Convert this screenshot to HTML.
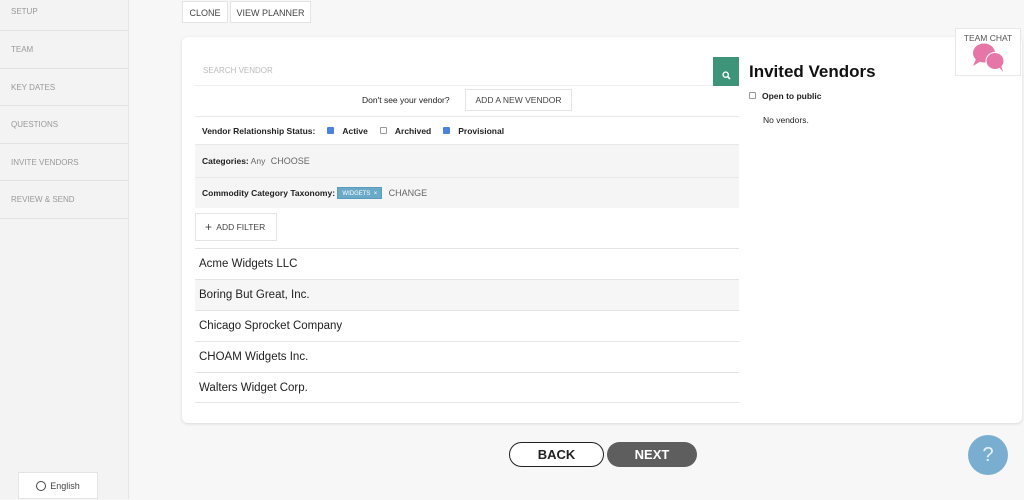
<!DOCTYPE html>
<html><head><style>
*{margin:0;padding:0;box-sizing:border-box}
body{width:1024px;height:499px;background:#f7f7f8;font-family:"Liberation Sans",sans-serif;position:relative;overflow:hidden;color:#222}
.sb{position:absolute;left:0;top:0;width:129px;height:499px;background:#f3f3f4;border-right:1px solid #e6e6e6}
.sb div{height:37.5px;border-bottom:1px solid #e2e2e2;font-size:8px;color:#999;padding:0 11px;line-height:37px}
.sb div:first-child{height:31px;line-height:24px}
.btn{position:absolute;background:#fff;border:1px solid #e4e4e4;font-size:9px;color:#444;text-align:center}
.panel{position:absolute;left:182px;top:37px;width:840px;height:386px;background:#fff;border-radius:6px;box-shadow:0 1px 3px rgba(0,0,0,.12)}
.a{position:absolute}
.row{position:absolute;left:13px;width:544px;font-size:8.5px}
.vend{position:absolute;left:13px;width:544px;height:31px;border-top:1px solid #e4e4e4;font-size:11.5px;padding-left:4px;line-height:30px;color:#222}
.cb{display:inline-block;width:7px;height:7px;border:1px solid #999;border-radius:1px;vertical-align:0;margin:0 8px 0 12px;background:#fff}
.cb.on{background:#4a82dd;border-color:#4a82dd}
b{font-weight:bold}
</style></head><body>
<div class="sb">
<div>SETUP</div><div>TEAM</div><div>KEY DATES</div><div>QUESTIONS</div><div>INVITE VENDORS</div><div>REVIEW &amp; SEND</div>
</div>
<div class="btn" style="left:18px;top:472px;width:80px;height:27px;line-height:27px;font-size:9px;color:#444"><span style="display:inline-block;width:10px;height:10px;border:1.5px solid #444;border-radius:50%;vertical-align:-2px;margin-right:4px"></span>English</div>
<div class="btn" style="left:182px;top:1px;width:46px;height:22px;line-height:22px">CLONE</div>
<div class="btn" style="left:230px;top:1px;width:81px;height:22px;line-height:22px">VIEW PLANNER</div>
<div class="panel">
 <div class="a" style="left:21px;top:29px;font-size:8px;color:#bbb">SEARCH VENDOR</div>
 <div class="a" style="left:13px;top:48px;width:520px;border-top:1px solid #eee"></div>
 <div class="a" style="left:531px;top:20px;width:26px;height:29px;background:#3d9478;text-align:center;padding-top:10px"><svg width="9" height="9" viewBox="0 0 9 9"><circle cx="3.7" cy="3.7" r="2.6" fill="none" stroke="#fff" stroke-width="1.4"/><path d="M5.6 5.6 L8 8" stroke="#fff" stroke-width="1.6"/></svg></div>
 <div class="a" style="left:180px;top:58px;font-size:8.5px">Don't see your vendor?</div>
 <div class="a" style="left:283px;top:52px;width:107px;height:22px;border:1px solid #e4e4e4;font-size:8.5px;color:#444;text-align:center;line-height:21px">ADD A NEW VENDOR</div>
 <div class="row" style="top:79px;height:28px;border-top:1px solid #e8e8e8;line-height:28px;padding-left:7px"><b>Vendor Relationship Status:</b><span class="cb on"></span><b>Active</b><span class="cb"></span><b>Archived</b><span class="cb on"></span><b>Provisional</b></div>
 <div class="row" style="top:107px;height:33px;background:#f5f5f6;border-top:1px solid #e8e8e8;line-height:33px;padding-left:7px"><b>Categories:</b> <span style="color:#666">Any</span> <span style="color:#666;font-size:9px;margin-left:3px">CHOOSE</span></div>
 <div class="row" style="top:140px;height:31px;background:#f5f5f6;border-top:1px solid #e8e8e8;line-height:31px;padding-left:7px"><b>Commodity Category Taxonomy:</b> <span style="display:inline-block;background:#6aaac8;color:#fff;font-size:6px;height:12px;line-height:12px;padding:0 4px;vertical-align:1px;border:1px solid #5b9cbc">WIDGETS &nbsp;×</span> <span style="color:#666;font-size:9px;margin-left:4px">CHANGE</span></div>
 <div class="a" style="left:13px;top:176px;width:82px;height:28px;border:1px solid #e4e4e4;font-size:8.5px;color:#444;line-height:27px;padding-left:9px"><span style="font-size:12px;vertical-align:-1px">+</span>&nbsp; ADD FILTER</div>
 <div class="vend" style="top:211px">Acme Widgets LLC</div>
 <div class="vend" style="top:242px;background:#f6f6f6">Boring But Great, Inc.</div>
 <div class="vend" style="top:273px">Chicago Sprocket Company</div>
 <div class="vend" style="top:304px">CHOAM Widgets Inc.</div>
 <div class="vend" style="top:335px;border-bottom:1px solid #e4e4e4">Walters Widget Corp.</div>
 <div class="a" style="left:567px;top:25px;font-size:17px;font-weight:bold;color:#111">Invited Vendors</div>
 <div class="a" style="left:567px;top:54px;font-size:8.5px"><span class="cb" style="margin:0 6px 0 0"></span><b>Open to public</b></div>
 <div class="a" style="left:581px;top:78px;font-size:8.5px">No vendors.</div>
</div>
<div class="a" style="left:955px;top:28px;width:66px;height:48px;background:#fff;border:1px solid #e8e8e8;font-size:8.5px;color:#555;text-align:center;padding-top:4px">TEAM CHAT
<svg width="40" height="32" viewBox="0 0 40 32" style="display:block;margin:-1px auto 0"><ellipse cx="16" cy="11" rx="11" ry="9.5" fill="#e676a8"/><path d="M8 17 L5 24 L13 19Z" fill="#e676a8"/><ellipse cx="27" cy="19" rx="9" ry="8.5" fill="#e676a8" stroke="#fff" stroke-width="1"/><path d="M31 25 L35 30 L33 23Z" fill="#e676a8"/></svg></div>
<div class="a" style="left:509px;top:442px;width:95px;height:25px;border:1.5px solid #222;border-radius:13px;background:#fff;text-align:center;line-height:23px;font-size:13px;font-weight:bold">BACK</div>
<div class="a" style="left:607px;top:442px;width:90px;height:25px;border-radius:13px;background:#5e5e5e;color:#fff;text-align:center;line-height:25px;font-size:13px;font-weight:bold">NEXT</div>
<div class="a" style="left:968px;top:435px;width:40px;height:40px;border-radius:50%;background:#79aed0;color:#e8f2f8;text-align:center;line-height:40px;font-size:20px">?</div>
</body></html>
